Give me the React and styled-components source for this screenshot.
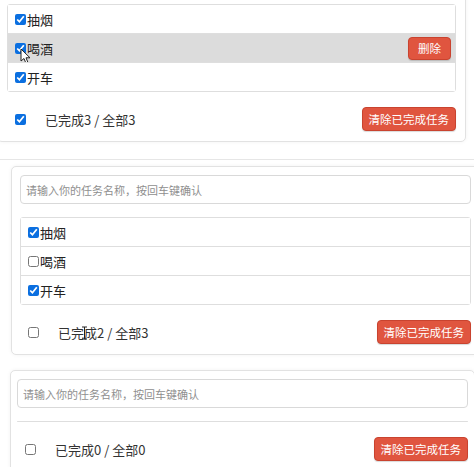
import React from "react";
import styled, { createGlobalStyle } from "styled-components";

const GlobalStyle = createGlobalStyle`
  html, body {
    margin: 0;
    padding: 0;
    background: #fff;
    overflow: hidden;
  }
  body {
    font-family: "Noto Sans CJK SC", "Noto Sans", sans-serif;
    color: #333;
  }
`;

const Page = styled.div`
  width: 474px;
  height: 467px;
  overflow: hidden;
  display: flex;
  flex-direction: column;
`;

const Panel = styled.section`
  box-sizing: border-box;
  flex: none;
  width: ${(p) => p.$width}px;
  margin: ${(p) => p.$mt}px 0 0 ${(p) => p.$ml}px;
  padding: ${(p) => p.$pt}px ${(p) => p.$px}px 0;
  border: 1px solid #e2e2e2;
  border-radius: 5px;
  box-shadow: 0 0 4px rgba(0, 0, 0, 0.05);
  background: #fff;
`;

const Divider = styled.div`
  flex: none;
  height: 1px;
  margin: 17px 0 6px;
  background: #e6e6e6;
`;

const TaskInput = styled.input`
  box-sizing: border-box;
  display: block;
  width: 100%;
  height: 29px;
  margin: 0 0 13px;
  padding: 0 5px;
  border: 1px solid #d9d9d9;
  border-radius: 4px;
  font-family: inherit;
  font-size: 11px;
  outline: none;
  &::placeholder {
    color: #8f8f8f;
  }
`;

const List = styled.ul`
  list-style: none;
  margin: 0;
  padding: 0;
  border: 1px solid #dedede;
  border-width: ${(p) => (p.$empty ? "1px 0 0" : "1px")};
  border-radius: 3px;
`;

const Row = styled.li`
  position: relative;
  display: flex;
  align-items: center;
  height: 28px;
  padding: 0 4px 0 7px;
  background: ${(p) => (p.$hover ? "#dcdcdc" : "#fff")};
  & + & {
    border-top: 1px solid #dedede;
  }
`;

const ItemLabel = styled.label`
  display: flex;
  align-items: center;
  font-size: 13px;
  color: #222;
`;

const Check = styled.input.attrs({ type: "checkbox", readOnly: true })`
  width: 11px;
  height: 11px;
  margin: 0 1px 0 0;
  accent-color: #0b6fe0;
`;

const DangerButton = styled.button`
  box-sizing: border-box;
  height: ${(p) => (p.$small ? 23 : 24)}px;
  padding: 0 ${(p) => (p.$small ? 9 : 6)}px;
  margin-left: auto;
  border: 1px solid #c9432f;
  border-radius: 4px;
  background: #e0553f;
  color: #fff;
  font-family: inherit;
  font-size: 11.5px;
  box-shadow: 0 1px 1px rgba(0, 0, 0, 0.15);
`;

const Footer = styled.div`
  position: relative;
  display: flex;
  align-items: center;
  padding: 15px 0 10px 8px;
`;

const Summary = styled.span`
  margin-left: 18px;
  font-size: 13px;
  color: #333;
`;

const Pointer = styled.svg`
  position: absolute;
  left: 12px;
  top: 14px;
  width: 11px;
  height: 17px;
`;

const IBeam = styled.svg`
  position: absolute;
  left: 61px;
  top: 21px;
  width: 7px;
  height: 14px;
`;

function TaskItem({ name, done, hover }) {
  return (
    <Row $hover={hover}>
      <ItemLabel>
        <Check checked={done} />
        <span>{name}</span>
      </ItemLabel>
      {hover && (
        <>
          <DangerButton $small>删除</DangerButton>
          <Pointer viewBox="0 0 11 17">
            <path
              d="M1 1 L1 13 L4 10.5 L6 15.5 L8 14.6 L6 9.8 L10 9.8 Z"
              fill="#fff"
              stroke="#222"
              strokeWidth="1"
              strokeLinejoin="round"
            />
          </Pointer>
        </>
      )}
    </Row>
  );
}

function TodoPanel({ layout, tasks, hoverIndex, showCaret }) {
  const done = tasks.filter((t) => t.done).length;
  const all = tasks.length > 0 && done === tasks.length;
  return (
    <Panel {...layout}>
      <TaskInput placeholder="请输入你的任务名称，按回车键确认" />
      <List $empty={tasks.length === 0}>
        {tasks.map((t, i) => (
          <TaskItem key={t.name} name={t.name} done={t.done} hover={i === hoverIndex} />
        ))}
      </List>
      <Footer>
        <Check checked={all} />
        <Summary>
          已完成{done} / 全部{tasks.length}
        </Summary>
        {showCaret && (
          <IBeam viewBox="0 0 7 14">
            <path d="M1 1 H6 M3.5 1 V13 M1 13 H6" stroke="#222" strokeWidth="1" fill="none" />
          </IBeam>
        )}
        <DangerButton>清除已完成任务</DangerButton>
      </Footer>
    </Panel>
  );
}

export default function App() {
  return (
    <>
      <GlobalStyle />
      <Page>
        <TodoPanel
          layout={{ $mt: -48, $ml: -3, $width: 469, $pt: 9, $px: 9 }}
          hoverIndex={1}
          tasks={[
            { name: "抽烟", done: true },
            { name: "喝酒", done: true },
            { name: "开车", done: true },
          ]}
        />
        <Divider />
        <TodoPanel
          layout={{ $mt: 0, $ml: 11, $width: 469, $pt: 8, $px: 8 }}
          showCaret
          tasks={[
            { name: "抽烟", done: true },
            { name: "喝酒", done: false },
            { name: "开车", done: true },
          ]}
        />
        <TodoPanel layout={{ $mt: 15, $ml: 10, $width: 465, $pt: 8, $px: 6 }} tasks={[]} />
      </Page>
    </>
  );
}
